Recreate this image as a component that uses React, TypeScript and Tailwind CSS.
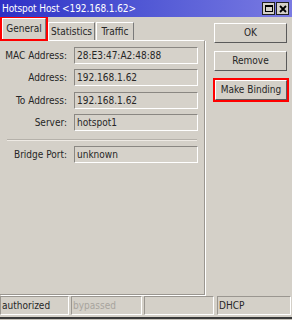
import React from "react";

const font = { fontFamily: '"DejaVu Sans Condensed", "DejaVu Sans", sans-serif', fontStretch: "condensed" as const };

function Field({ label, value }: { label: string; value: string }) {
  return (
    <div className="flex items-center h-[17px]">
      <div className="w-[67px] text-right text-[10px] text-[#262626] leading-none">{label}</div>
      <div className="ml-[7px] w-[124px] h-[17px] border-t border-l border-t-[#8a8782] border-l-[#8a8782] border-b border-r border-b-white border-r-white bg-[#d6d2ca] flex items-center pl-[2px] text-[10px] text-[#262626] leading-none">
        {value}
      </div>
    </div>
  );
}

function Btn({ children }: { children: React.ReactNode }) {
  return (
    <div className="w-[73px] h-[20px] bg-[#d4d0c8] border-t border-l border-t-white border-l-white border-b border-r border-b-[#5a5a5a] border-r-[#5a5a5a] flex items-center justify-center text-[10px] text-[#262626] leading-none">
      {children}
    </div>
  );
}

export default function App() {
  return (
    <div style={font} className="w-[292px] h-[320px] bg-[#d4d0c8] flex flex-col overflow-hidden">
      {/* title bar */}
      <div className="h-[17px] bg-gradient-to-r from-[#2f2fc6] to-[#7a7ae2] flex items-center justify-between pl-[2px] pr-[3px]">
        <span className="text-white text-[10px] tracking-[-0.1px] leading-none">Hotspot Host &lt;192.168.1.62&gt;</span>
        <div className="flex gap-[1px]">
          <div className="w-[13px] h-[13px] bg-[#d4d0c8] border border-[#202020] flex items-center justify-center">
            <div className="w-[8px] h-[7px] border border-black border-t-2"></div>
          </div>
          <div className="w-[13px] h-[13px] bg-[#d4d0c8] border border-[#202020] flex items-center justify-center">
            <svg width="8" height="8" viewBox="0 0 8 8">
              <path d="M1 1 L7 7 M7 1 L1 7" stroke="black" strokeWidth="1.8" />
            </svg>
          </div>
        </div>
      </div>

      <div className="flex">
        {/* left */}
        <div className="w-[205px] flex flex-col">
          {/* tabs */}
          <div className="h-[23px] flex items-end">
            <div className="h-[24px] border-2 border-[#ff0000] -mb-[1px] flex items-end relative z-10 w-[48px]">
              <div className="h-[21px] w-[44px] bg-[#d4d0c8] border-t border-l border-t-white border-l-white border-r border-r-[#7a7a7a] flex items-center justify-center text-[10px] text-[#262626] leading-none">
                General
              </div>
            </div>
            <div className="h-[18px] w-[47px] border-t border-l border-t-white border-l-white border-r border-r-[#7a7a7a] flex items-center justify-center text-[10px] text-[#262626] leading-none">
              Statistics
            </div>
            <div className="h-[18px] w-[38px] ml-[1px] border-t border-l border-t-white border-l-white border-r border-r-[#7a7a7a] flex items-center justify-center text-[10px] text-[#262626] leading-none">
              Traffic
            </div>
          </div>
          {/* panel */}
          <div className="h-[255px] border-t border-t-white border-r border-r-[#9a9690] border-b border-b-[#9a9690] shadow-[1px_1px_0_#ffffff] pt-[6px] flex flex-col">
            <Field label="MAC Address:" value="28:E3:47:A2:48:88" />
            <div className="h-[5px]" />
            <Field label="Address:" value="192.168.1.62" />
            <div className="h-[6px]" />
            <Field label="To Address:" value="192.168.1.62" />
            <div className="h-[5px]" />
            <Field label="Server:" value="hotspot1" />
            <div className="ml-[7px] w-[190px] mt-[8px] h-[2px] border-t border-t-[#b5b1aa] border-b border-b-[#eeeae4]" />
            <div className="h-[5px]" />
            <Field label="Bridge Port:" value="unknown" />
          </div>
        </div>
        {/* right buttons */}
        <div className="flex flex-col pl-[8px] pt-[6px]">
          <div className="ml-[1px]"><Btn>OK</Btn></div>
          <div className="ml-[1px] mt-[8px]"><Btn>Remove</Btn></div>
          <div className="mt-[7px] border-2 border-[#ff0000] w-[76px] h-[24px] flex items-center justify-center">
            <Btn>Make Binding</Btn>
          </div>
        </div>
      </div>

      {/* status bar */}
      <div className="mt-[1px] h-[19px] flex text-[10px] leading-none">
        <div className="w-[69px] border-t border-l border-t-[#9a9690] border-l-[#9a9690] border-b border-r border-b-white border-r-white flex items-center pl-[1px] text-[#262626]">authorized</div>
        <div className="ml-[2px] w-[71px] border-t border-l border-t-[#9a9690] border-l-[#9a9690] border-b border-r border-b-white border-r-white flex items-center pl-[1px] text-[#a8a49e]">bypassed</div>
        <div className="ml-[2px] w-[70px] border-t border-l border-t-[#9a9690] border-l-[#9a9690] border-b border-r border-b-white border-r-white"></div>
        <div className="ml-[3px] w-[74px] border-t border-l border-t-[#9a9690] border-l-[#9a9690] border-b border-r border-b-white border-r-white flex items-center pl-[1px] text-[#262626]">DHCP</div>
      </div>
      <div className="mt-[2px] h-[2px] bg-[#3a3a3a]" />
      <div className="flex-1 bg-[#c4c0b8]" />
    </div>
  );
}
